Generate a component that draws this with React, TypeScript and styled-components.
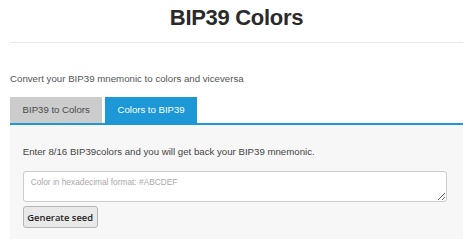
import { useState } from 'react'
import styled, { createGlobalStyle } from 'styled-components'

const GlobalStyle = createGlobalStyle`
  html, body {
    margin: 0;
    padding: 0;
    background: #ffffff;
  }
  body {
    font-family: "Liberation Sans", Arial, Helvetica, sans-serif;
    color: #333;
  }
`

type TabId = 'toColors' | 'toBip39'

const TABS: { id: TabId; label: string }[] = [
  { id: 'toColors', label: 'BIP39 to Colors' },
  { id: 'toBip39', label: 'Colors to BIP39' },
]

const App = () => {
  const [tab, setTab] = useState<TabId>('toBip39')
  const [colors, setColors] = useState('')

  return (
    <>
      <GlobalStyle />
      <Page>
        <Header>
          <Title>BIP39 Colors</Title>
        </Header>

        <Lead>Convert your BIP39 mnemonic to colors and viceversa</Lead>

        <TabBar>
          {TABS.map((t) => (
            <Tab key={t.id} $active={tab === t.id} onClick={() => setTab(t.id)}>
              {t.label}
            </Tab>
          ))}
        </TabBar>

        <Panel>
          <PanelText>Enter 8/16 BIP39colors and you will get back your BIP39 mnemonic.</PanelText>
          <ColorInput
            value={colors}
            onChange={(e) => setColors(e.target.value)}
            placeholder="Color in hexadecimal format: #ABCDEF"
          />
          <SeedButton type="button">Generate seed</SeedButton>
        </Panel>
      </Page>
    </>
  )
}

export default App

const Page = styled.div`
  padding: 0 11px 0 10px;
  display: flex;
  flex-direction: column;
`

const Header = styled.header`
  padding: 7px 0 13px;
  border-bottom: 1px solid #e8e8e8;
`

const Title = styled.h1`
  margin: 0;
  font-size: 22px;
  line-height: 22px;
  font-weight: 700;
  letter-spacing: -0.3px;
  text-align: center;
  color: #2a2a2a;
`

const Lead = styled.p`
  margin: 29px 0 11px;
  font-size: 9.7px;
  line-height: 14px;
  color: #555;
`

const TabBar = styled.nav`
  display: flex;
  gap: 2.5px;
  border-bottom: 2px solid #1b98d5;
`

const Tab = styled.button<{ $active: boolean }>`
  border: none;
  margin: 0;
  padding: 0 12.6px;
  height: 26px;
  font-family: "Liberation Sans", Arial, Helvetica, sans-serif;
  font-size: 9.6px;
  line-height: 26px;
  cursor: pointer;
  background: ${(p) => (p.$active ? '#1b98d5' : '#cccccc')};
  color: ${(p) => (p.$active ? '#ffffff' : '#4a4a4a')};
`

const Panel = styled.section`
  background: #f7f7f7;
  padding: 20px 12.7px 11px;
  display: flex;
  flex-direction: column;
  align-items: flex-start;
`

const PanelText = styled.p`
  margin: 0 0 12px;
  font-size: 9.66px;
  line-height: 14px;
  color: #444;
`

const ColorInput = styled.textarea`
  box-sizing: border-box;
  display: block;
  width: 424px;
  height: 31px;
  margin: 0 0 4px;
  padding: 5px 7px;
  border: 1px solid #cccccc;
  border-radius: 3px;
  background: #ffffff;
  font-family: "Liberation Sans", Arial, Helvetica, sans-serif;
  font-size: 8.33px;
  line-height: 10px;
  color: #333;

  &::placeholder {
    color: #a9a9a9;
  }
`

const SeedButton = styled.button`
  box-sizing: border-box;
  width: 75px;
  height: 22px;
  padding: 0;
  border: 1px solid #b5b5b5;
  border-radius: 3px;
  background: #e9e9e9;
  font-family: "Open Sans", "Noto Sans", sans-serif;
  font-size: 9.4px;
  font-weight: 600;
  color: #1e1e1e;
  cursor: pointer;
`
